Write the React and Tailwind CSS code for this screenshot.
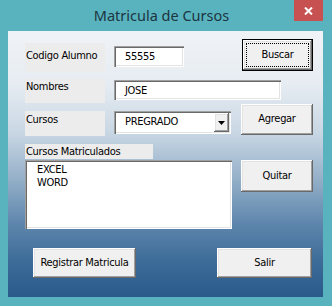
import React from 'react';

const raised =
    'bg-[#f0f0f0] shadow-[inset_-1px_-1px_0_#696969,inset_1px_1px_0_#ffffff,inset_-2px_-2px_0_#a0a0a0,inset_2px_2px_0_#e3e3e3]';
const sunken =
    'bg-white shadow-[inset_1px_1px_0_#a0a0a0,inset_2px_2px_0_#696969,inset_-1px_-1px_0_#ffffff,inset_-2px_-2px_0_#e3e3e3]';

const Btn = ({ children, className = '', isDefault = false }) => (
    <button
        className={`relative flex items-center justify-center text-black ${raised} ${isDefault ? 'border border-black' : ''} ${className}`}
    >
        {isDefault && <span className="absolute inset-[3px] border border-dotted border-black"></span>}
        {children}
    </button>
);

const Label = ({ children, className = '' }) => (
    <div className={`bg-[#ececec] pl-[1px] leading-[13px] text-black ${className}`}>{children}</div>
);

export default function App() {
    return (
        <div className="w-[332px] h-[306px] bg-[#58b3be] flex flex-col font-['DejaVu_Sans_Condensed','Liberation_Sans',sans-serif] text-[11px] tracking-[-0.3px]">
            {/* Title bar */}
            <div className="h-[31px] flex items-start shrink-0 tracking-normal">
                <div className="flex-1"></div>
                <div className="pt-[5px] font-['Noto_Sans',sans-serif] text-[14.5px] leading-[20px] text-[#1c3541]">
                    Matricula de Cursos
                </div>
                <div className="flex-1 flex justify-end pr-[9px]">
                    <div className="w-[29px] h-[21px] bg-[#c75050] flex items-center justify-center">
                        <svg width="9" height="8" viewBox="0 0 9 8">
                            <path d="M1 0.5 L8 7.5 M8 0.5 L1 7.5" stroke="#fff" strokeWidth="2" />
                        </svg>
                    </div>
                </div>
            </div>

            {/* Client area */}
            <div className="ml-[8px] w-[315px] h-[266px] bg-[linear-gradient(to_bottom,#f0f3f6_0%,#e6ecf2_20%,#c9d7e4_38%,#96b1c9_55%,#5f87ad_72%,#3c6b98_87%,#2a5a8b_100%)]">
                {/* Codigo Alumno */}
                <div className="flex items-start pt-[8px] pl-[17px]">
                    <Label className="mt-[4px] w-[80px] h-[29px] pt-[6px]">Codigo Alumno</Label>
                    <div className={`ml-[9px] mt-[7px] w-[70px] h-[21px] ${sunken} pl-[11px] leading-[21px]`}>55555</div>
                    <Btn isDefault className="ml-[58px] w-[71px] h-[32px]">Buscar</Btn>
                </div>

                {/* Nombres */}
                <div className="flex items-start mt-[7px] pl-[17px]">
                    <Label className="w-[80px] h-[24px] pt-[1px]">Nombres</Label>
                    <div className={`ml-[9px] mt-[1px] w-[167px] h-[20px] ${sunken} pl-[11px] leading-[21px]`}>JOSE</div>
                </div>

                {/* Cursos */}
                <div className="flex items-start mt-[1px] pl-[17px]">
                    <Label className="mt-[7px] w-[80px] h-[25px] pt-[2px]">Cursos</Label>
                    <div className={`ml-[9px] mt-[7px] w-[117px] h-[23px] ${sunken} flex items-center pl-[11px] pr-[2px]`}>
                        <span className="flex-1">PREGRADO</span>
                        <div className={`w-[15px] h-[19px] ${raised} flex items-center justify-center`}>
                            <svg width="7" height="4" viewBox="0 0 7 4">
                                <path d="M0 0 L7 0 L3.5 4 Z" fill="#000" />
                            </svg>
                        </div>
                    </div>
                    <Btn className="ml-[10px] w-[72px] h-[31px]">Agregar</Btn>
                </div>

                {/* Cursos Matriculados */}
                <div className="flex items-start mt-[8px] pl-[17px]">
                    <div className="flex flex-col">
                        <Label className="w-[128px] h-[15px] pt-[1px]">Cursos Matriculados</Label>
                        <div className={`mt-[1px] w-[207px] h-[69px] ${sunken} pl-[12px] pt-[3px] leading-[13px]`}>
                            <div>EXCEL</div>
                            <div>WORD</div>
                        </div>
                    </div>
                    <Btn className="ml-[9px] mt-[16px] w-[72px] h-[32px]">Quitar</Btn>
                </div>

                {/* Bottom buttons */}
                <div className="flex items-start mt-[19px] pl-[25px]">
                    <Btn className="w-[103px] h-[30px]">Registrar Matricula</Btn>
                    <Btn className="ml-[81px] w-[95px] h-[30px]">Salir</Btn>
                </div>
            </div>
        </div>
    );
}
